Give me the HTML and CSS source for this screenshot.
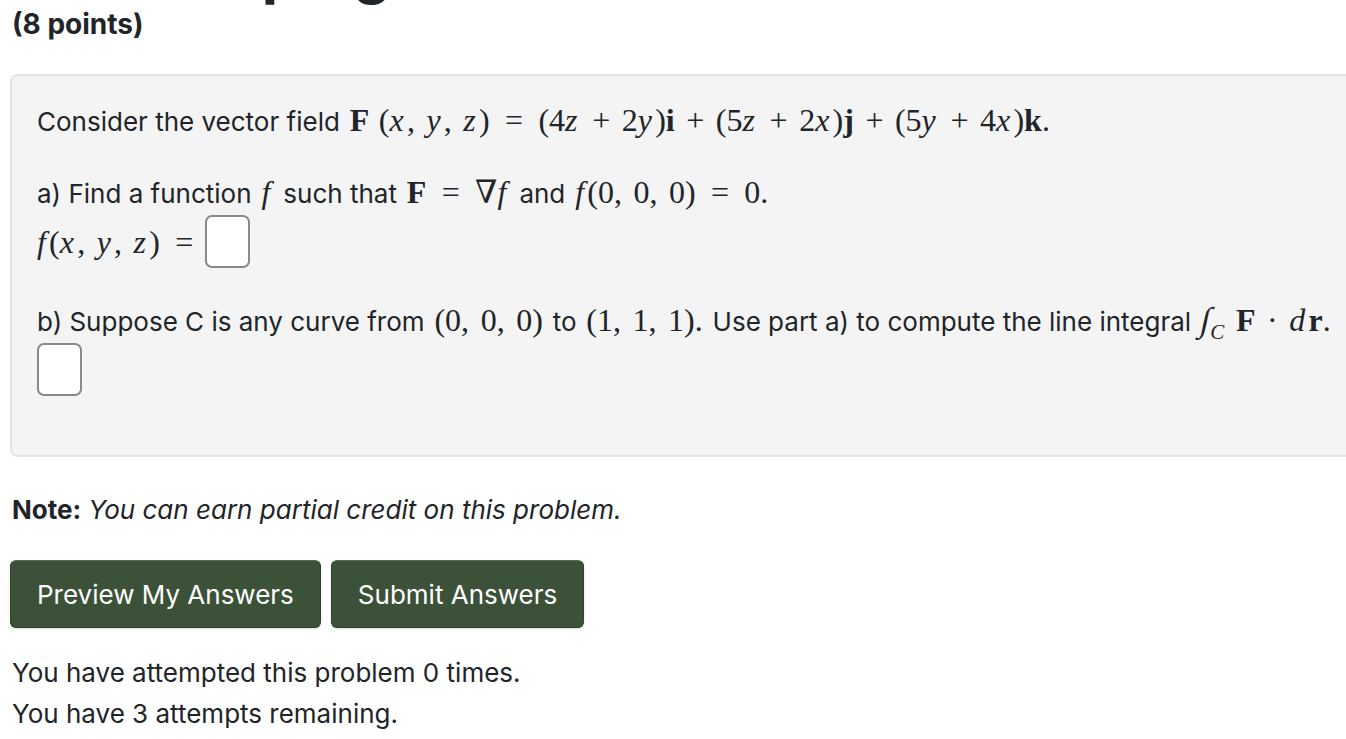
FILE: index.html
```html
<!DOCTYPE html>
<html lang="en">
<head>
    <meta charset="UTF-8">
    <meta name="viewport" content="width=device-width, initial-scale=1.0">
    <title>Problem</title>
    <link rel="stylesheet" href="styles.css">
</head>
<body>
    <div class="page">
        <h1 class="set-title">HW: Scoping</h1>
        <h2 class="points">(8 points)</h2>

        <div class="problem">
            <p class="line">Consider the vector field <span class="m"><b>F</b><span class="gap"></span>(<i>x</i><span class="c">,</span><i>y</i><span class="c">,</span><i>z</i>)<span class="rel">=</span>(4<i>z</i><span class="op">+</span>2<i>y</i>)<b>i</b><span class="op">+</span>(5<i>z</i><span class="op">+</span>2<i>x</i>)<b>j</b><span class="op">+</span>(5<i>y</i><span class="op">+</span>4<i>x</i>)<b>k</b>.</span></p>

            <p class="line">a) Find a function <span class="m"><i>f</i></span> such that <span class="m"><b>F</b><span class="rel">=</span>&nabla;<i>f</i></span> and <span class="m"><i>f</i>(0<span class="c">,</span>0<span class="c">,</span>0)<span class="rel">=</span>0.</span></p>
            <p class="answer-line"><span class="m"><i>f</i>(<i>x</i><span class="c">,</span><i>y</i><span class="c">,</span><i>z</i>)<span class="rel">=</span></span><input class="answer" type="text"></p>

            <p class="line part-b">b) Suppose C is any curve from <span class="m">(0<span class="c">,</span>0<span class="c">,</span>0)</span> to <span class="m">(1<span class="c">,</span>1<span class="c">,</span>1).</span> Use part a) to compute the line integral <span class="m"><span class="int">&int;</span><sub><i>C</i></sub><span class="gap"></span><b>F</b><span class="op">&middot;</span><i>d</i><b>r</b>.</span></p>
            <p class="answer-line"><input class="answer" type="text"></p>
        </div>

        <p class="note"><b>Note:</b> <i>You can earn partial credit on this problem.</i></p>

        <div class="buttons">
            <button class="btn">Preview My Answers</button>
            <button class="btn">Submit Answers</button>
        </div>

        <div class="attempts">
            <p>You have attempted this problem 0 times.</p>
            <p>You have 3 attempts remaining.</p>
        </div>
    </div>
</body>
</html>
```

FILE: styles.css
```css
body {
    margin: 0;
    padding: 0;
    background-color: #fff;
    color: #212529;
    font-family: Inter, "Liberation Sans", sans-serif;
    font-size: 26px;
    overflow: hidden;
}
.page {
    padding-left: 10px;
}
.set-title {
    margin: -66px 0 0 2px;
    font-size: 60px;
    line-height: 72px;
    font-weight: 700;
    white-space: nowrap;
}
.points {
    margin: 0 0 0 2px;
    font-size: 28px;
    line-height: 36px;
    font-weight: 700;
}
.problem {
    margin-top: 32px;
    margin-right: -30px;
    background-color: #f4f4f4;
    border: 2px solid #e3e3e3;
    border-radius: 8px;
    padding: 25px 25px 59px;
}
.line {
    margin: 0;
    line-height: 42px;
    white-space: nowrap;
}
.line + .line {
    margin-top: 30px;
}
.answer-line + .line {
    margin-top: 33px;
}
.m {
    padding: 0 0.08em;
    font-family: "Liberation Serif", "DejaVu Serif", serif;
    font-size: 32px;
    line-height: 1;
}
.m i {
    font-style: italic;
    margin-right: 0.1em;
}
.m b {
    font-weight: 700;
}
.gap {
    display: inline-block;
    width: 0.3em;
}
.c {
    margin-right: 0.36em;
}
.op {
    margin: 0 0.36em;
}
.rel {
    margin: 0 0.48em;
}
.int {
    display: inline-block;
    font-size: 34px;
    transform: skewX(-12deg);
}
.m sub {
    font-size: 21px;
    line-height: 1;
    vertical-align: -8px;
}
.answer-line {
    display: flex;
    align-items: center;
    gap: 2px;
    margin: 0;
}
.answer-line .m {
    padding: 0;
}
.answer-line .rel {
    margin-right: 0.3em;
}
.answer {
    width: 45px;
    height: 53px;
    box-sizing: border-box;
    margin: 0;
    border: 2px solid #8a8a8a;
    border-radius: 7px;
    background: #fff;
}
.note {
    margin: 32px 0 0 2px;
    line-height: 42px;
}
.buttons {
    display: flex;
    gap: 10px;
    margin-top: 29px;
}
.btn {
    height: 68px;
    padding: 0 26px;
    font-family: Inter, "Liberation Sans", sans-serif;
    font-size: 26px;
    color: #fff;
    background-color: #3b5239;
    border: 1px solid #2f432e;
    border-top-color: #566b54;
    border-radius: 6px;
    box-shadow: 0 1px 2px rgba(0, 0, 0, 0.15);
}
.attempts {
    margin-top: 24px;
}
.attempts p {
    margin: 0 0 0 2px;
    line-height: 41px;
}
```
